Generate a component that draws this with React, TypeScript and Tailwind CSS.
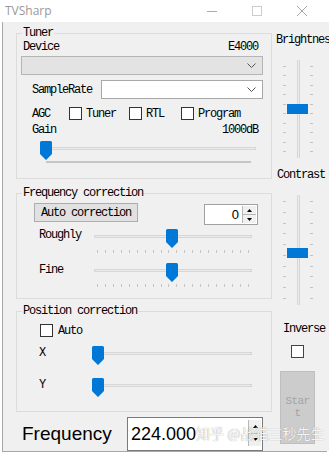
import React from 'react';

const mono = "font-['Liberation_Mono',monospace] text-[12px] leading-[12px] tracking-[-1.2px] text-black whitespace-nowrap";

function Chevron() {
  return (
    <svg width="9" height="5" viewBox="0 0 9 5" className="shrink-0">
      <path d="M0.5 0.5L4.5 4.5L8.5 0.5" fill="none" stroke="#555" strokeWidth="1" />
    </svg>
  );
}

function Check({ className = '' }: { className?: string }) {
  return <div className={`h-[13px] w-[13px] shrink-0 border border-[#333] bg-white ${className}`} />;
}

function Thumb() {
  return (
    <svg width="12" height="19" viewBox="0 0 12 19">
      <path d="M0 1.5A1.5 1.5 0 0 1 1.5 0h9A1.5 1.5 0 0 1 12 1.5V13l-6 6l-6-6z" fill="#0078d7" />
    </svg>
  );
}

function HSlider({ className, thumb, ticks }: { className: string; thumb: number; ticks: 'none' | 'sparse' | 'dense' }) {
  return (
    <div className={`flex shrink-0 flex-col ${className}`}>
      <div className="relative h-[19px]">
        <div className="mx-[3px] mt-[6px] h-[3px] border border-[#d6d6d6] bg-[#ececec]" />
        <div className="absolute top-0" style={{ left: thumb }}>
          <Thumb />
        </div>
      </div>
      {ticks === 'sparse' && (
        <div className="mt-[2px] flex justify-between px-[6px]">
          {Array.from({ length: 20 }).map((_, i) => (
            <div key={i} className="h-[3px] w-px bg-[#c4c4c4]" />
          ))}
        </div>
      )}
      {ticks === 'dense' && <div className="ml-[6px] mr-[8px] mt-px h-[2px] bg-[#c6c6c6]" />}
    </div>
  );
}

function VSlider({ className, thumb }: { className: string; thumb: number }) {
  const tickCol = (
    <div className="flex w-[3px] flex-col justify-between py-[6px]">
      {Array.from({ length: 10 }).map((_, i) => (
        <div key={i} className="h-px w-[3px] bg-[#c4c4c4]" />
      ))}
    </div>
  );
  return (
    <div className={`relative flex w-[30px] ${className}`}>
      {tickCol}
      <div className="ml-[11px] w-[3px] border-x border-[#d6d6d6] bg-[#ececec]" />
      <div className="ml-[10px] flex">{tickCol}</div>
      <div className="absolute left-[4px] h-[10px] w-[21px] bg-[#0078d7]" style={{ top: thumb }} />
    </div>
  );
}

function Group({ title, className, children }: { title: string; className: string; children: React.ReactNode }) {
  return (
    <fieldset className={`flex w-[256px] flex-col border border-[#dcdcdc] ${className}`}>
      <legend className={`ml-[5px] px-px ${mono}`}>{title}</legend>
      {children}
    </fieldset>
  );
}

function Spin({ className }: { className: string }) {
  return (
    <div className={`flex flex-col border-l border-[#b8b8b8] bg-[#f0f0f0] ${className}`}>
      <div className="flex flex-1 items-center justify-center border-b border-[#b8b8b8]">
        <svg width="5" height="3" viewBox="0 0 5 3"><path d="M2.5 0L5 3H0z" fill="#000" /></svg>
      </div>
      <div className="flex flex-1 items-center justify-center">
        <svg width="5" height="3" viewBox="0 0 5 3"><path d="M0 0h5L2.5 3z" fill="#000" /></svg>
      </div>
    </div>
  );
}

export default function App() {
  return (
    <div className="relative h-[454px] w-[329px] overflow-hidden bg-white">
      {/* title bar */}
      <div className="flex h-[22px] items-center bg-white">
        <span className="ml-[5px] font-['Open_Sans',sans-serif] text-[12px] leading-[14px] text-[#999]">TVSharp</span>
        <div className="ml-auto mr-[22px] flex items-center gap-[35px]">
          <svg width="10" height="10" viewBox="0 0 10 10"><path d="M0 5.5h10" stroke="#aaa" strokeWidth="1" /></svg>
          <svg width="10" height="10" viewBox="0 0 10 10"><rect x="0.5" y="0.5" width="9" height="9" fill="none" stroke="#ccc" /></svg>
          <svg width="10" height="10" viewBox="0 0 10 10"><path d="M0 0L10 10M10 0L0 10" stroke="#aaa" strokeWidth="1" /></svg>
        </div>
      </div>

      {/* window body */}
      <div className="flex h-[429px] pl-[2px] pr-[2px]">
        <div className="flex flex-1 border-x border-[#a8a8a8] bg-[#f0f0f0]">
          {/* left column */}
          <div className="ml-[13px] flex w-[256px] flex-col">
            <Group title="Tuner" className="mt-[5px] pb-[15px]">
              <div className={`mt-[2px] flex justify-between pl-[6px] pr-[13px] ${mono}`}>
                <span>Device</span>
                <span>E4000</span>
              </div>
              <div className="ml-[4px] mt-[3px] flex h-[19px] w-[242px] items-center justify-end border border-[#b5b5b5] bg-[#e3e3e3] pr-[6px]">
                <Chevron />
              </div>
              <div className="mt-[5px] flex h-[19px] items-center pl-[15px]">
                <span className={mono}>SampleRate</span>
                <div className="ml-[9px] flex h-[19px] w-[162px] items-center justify-end border border-[#a8a8a8] bg-white pr-[6px]">
                  <Chevron />
                </div>
              </div>
              <div className={`mt-[8px] flex h-[13px] items-center pl-[15px] ${mono}`}>
                <span>AGC</span>
                <Check className="ml-[19px]" />
                <span className="ml-[4px]">Tuner</span>
                <Check className="ml-[13px]" />
                <span className="ml-[4px]">RTL</span>
                <Check className="ml-[17px]" />
                <span className="ml-[4px]">Program</span>
              </div>
              <div className={`mt-[4px] flex justify-between pl-[15px] pr-[13px] ${mono}`}>
                <span>Gain</span>
                <span>1000dB</span>
              </div>
              <HSlider className="ml-[23px] mt-[5px] w-[219px]" thumb={0} ticks="dense" />
            </Group>

            <Group title="Frequency correction" className="mt-[8px] pb-[10px]">
              <div className="mt-[4px] flex h-[22px] items-start">
                <div className={`ml-[17px] flex h-[19px] w-[104px] items-center justify-center border border-[#adadad] bg-[#e1e1e1] ${mono}`}>
                  Auto correction
                </div>
                <div className="ml-auto mr-[13px] mt-px flex h-[21px] w-[54px] border border-[#a0a0a0] bg-white">
                  <span className="flex flex-1 items-center justify-end pr-[3px] font-['Liberation_Sans',sans-serif] text-[13px] leading-[15px] text-black">0</span>
                  <Spin className="my-px mr-px w-[14px]" />
                </div>
              </div>
              <div className="mt-[4px] flex h-[25px]">
                <span className={`ml-[22px] w-[52px] ${mono}`}>Roughly</span>
                <HSlider className="w-[164px]" thumb={75} ticks="sparse" />
              </div>
              <div className="mt-[9px] flex h-[25px]">
                <span className={`ml-[22px] w-[52px] pt-px ${mono}`}>Fine</span>
                <HSlider className="w-[164px]" thumb={75} ticks="sparse" />
              </div>
            </Group>

            <Group title="Position correction" className="mt-[6px] pb-[14px]">
              <div className={`ml-[23px] mt-[7px] flex h-[13px] items-center ${mono}`}>
                <Check />
                <span className="ml-[5px]">Auto</span>
              </div>
              <div className="mt-[9px] flex h-[19px]">
                <span className={`ml-[22px] w-[52px] pt-[1px] ${mono}`}>X</span>
                <HSlider className="w-[164px]" thumb={1} ticks="none" />
              </div>
              <div className="mt-[13px] flex h-[19px]">
                <span className={`ml-[22px] w-[52px] pt-[1px] ${mono}`}>Y</span>
                <HSlider className="w-[164px]" thumb={1} ticks="none" />
              </div>
            </Group>

            <div className="mt-[5px] flex h-[34px] items-center">
              <span className="ml-[6px] w-[105px] font-['Liberation_Sans',sans-serif] text-[19px] leading-[22px] text-black">Frequency</span>
              <div className="flex h-[34px] w-[136px] border border-[#7a7a7a] bg-white">
                <span className="flex flex-1 items-center pl-[3px] font-['Liberation_Sans',sans-serif] text-[18px] leading-[22px] text-black">224.000</span>
                <Spin className="mb-[4px] mr-px mt-[2px] w-[13px]" />
              </div>
            </div>
          </div>

          {/* right column */}
          <div className="ml-[4px] flex flex-1 flex-col overflow-hidden">
            <span className={`mt-[12px] ${mono}`}>Brightness</span>
            <VSlider className="ml-[7px] mt-[14px] h-[98px]" thumb={44} />
            <span className={`ml-px mt-[11px] ${mono}`}>Contrast</span>
            <VSlider className="ml-[7px] mt-[14px] h-[110px]" thumb={53} />
            <span className={`ml-[7px] mt-[18px] ${mono}`}>Inverse</span>
            <Check className="ml-[15px] mt-[10px] !border-[#444]" />
            <div className="ml-[4px] mt-[13px] flex h-[73px] w-[35px] flex-col items-center justify-center gap-[1px] border border-[#bfbfbf] bg-[#cccccc] font-['Liberation_Mono',monospace] text-[11px] leading-[11px] tracking-[-0.6px] text-[#a3a3a3]">
              <span>Star</span>
              <span>t</span>
            </div>
          </div>
        </div>
      </div>
      <div className="mx-[2px] h-px bg-[#a8a8a8]" />

      {/* watermark */}
      <div className="absolute left-[196px] top-[424px] font-['Noto_Sans_CJK_SC',sans-serif] text-[14px] leading-[18px] text-white/90 [text-shadow:0_0_1px_#888]">
        知乎 @战猫三秒先生
      </div>
    </div>
  );
}
